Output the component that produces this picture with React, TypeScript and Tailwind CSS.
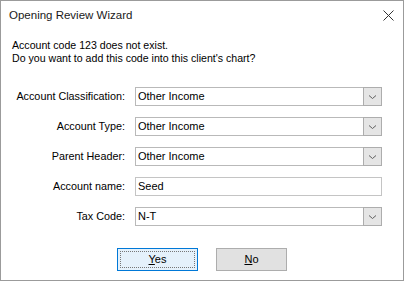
import React from 'react';

const font = { fontFamily: '"Liberation Sans", Arial, sans-serif' };

function Combo({ value }: { value: string }) {
  return (
    <div className="flex h-[19px] w-[247px] items-stretch border border-[#b9b9b9] bg-white">
      <div className="flex flex-1 items-center pl-[2px] text-[11px] text-black">{value}</div>
      <div className="m-[-1px] flex w-[19px] items-center justify-center border border-[#adadad] bg-[#e5e5e5]">
        <svg width="9" height="6" viewBox="0 0 9 6">
          <path d="M1 1.5 L4.5 4.5 L8 1.5" fill="none" stroke="#606060" strokeWidth="1" />
        </svg>
      </div>
    </div>
  );
}

function TextBox({ value }: { value: string }) {
  return (
    <div className="flex h-[19px] w-[247px] items-center border border-[#c4c4c4] bg-white pl-[2px] text-[11px] text-black">
      {value}
    </div>
  );
}

export default function App() {
  const rows: { label: string; value: string; kind: 'combo' | 'text' }[] = [
    { label: 'Account Classification:', value: 'Other Income', kind: 'combo' },
    { label: 'Account Type:', value: 'Other Income', kind: 'combo' },
    { label: 'Parent Header:', value: 'Other Income', kind: 'combo' },
    { label: 'Account name:', value: 'Seed', kind: 'text' },
    { label: 'Tax Code:', value: 'N-T', kind: 'combo' },
  ];

  return (
    <div className="flex h-[281px] w-[404px] flex-col border border-[#9b9b9b] bg-white" style={font}>
      <div className="flex h-[29px] items-center justify-between pl-[8px] pr-[9px]">
        <span className="text-[11.5px] text-[#1a1a1a]">Opening Review Wizard</span>
        <svg width="11" height="11" viewBox="0 0 11 11">
          <path d="M0.5 0.5 L10.5 10.5 M10.5 0.5 L0.5 10.5" stroke="#333" strokeWidth="1" />
        </svg>
      </div>

      <div className="mt-[9px] pl-[11px] text-[10.6px] leading-[13px] text-black">
        <div>Account code 123 does not exist.</div>
        <div>Do you want to add this code into this client's chart?</div>
      </div>

      <div className="mt-[22px] flex flex-col gap-[11px]">
        {rows.map((r, i) => (
          <div key={i} className="flex items-center gap-[10px]">
            <div className="w-[124px] text-right text-[10.8px] text-black">{r.label}</div>
            {r.kind === 'combo' ? <Combo value={r.value} /> : <TextBox value={r.value} />}
          </div>
        ))}
      </div>

      <div className="mt-[22px] flex gap-[18px] pl-[116px]">
        <button className="flex h-[23px] w-[81px] items-center justify-center border border-[#0078d7] bg-[#e5f1fb] p-[2px] text-[11px] text-black">
          <span className="flex h-full w-full items-center justify-center border border-dotted border-[#777]">
            <span><span className="underline">Y</span>es</span>
          </span>
        </button>
        <button className="flex h-[23px] w-[71px] items-center justify-center border border-[#adadad] bg-[#e1e1e1] text-[11px] text-black">
          <span><span className="underline">N</span>o</span>
        </button>
      </div>
    </div>
  );
}
